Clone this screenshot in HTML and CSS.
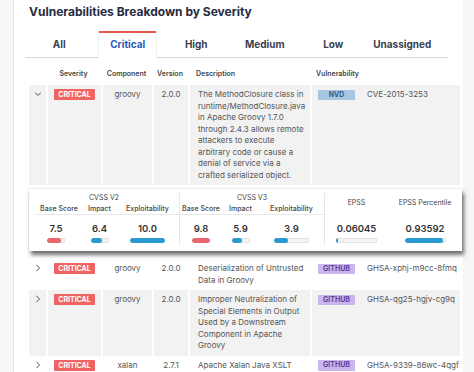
FILE: index.html
```html
<!DOCTYPE html>
<html>
<head>
<meta charset="utf-8">
<link rel="stylesheet" href="styles.css">
</head>
<body>
<div class="panel">
  <h1 class="title">Vulnerabilities Breakdown by Severity</h1>
  <div class="tabs">
    <div class="tab">All</div>
    <div class="tab active">Critical</div>
    <div class="tab">High</div>
    <div class="tab">Medium</div>
    <div class="tab">Low</div>
    <div class="tab">Unassigned</div>
  </div>
  <table class="vulns">
    <colgroup>
      <col class="c-chev"><col class="c-sev"><col class="c-comp"><col class="c-ver"><col class="c-desc"><col class="c-vuln">
    </colgroup>
    <thead>
      <tr>
        <th></th><th>Severity</th><th>Component</th><th>Version</th><th class="left desc-h">Description</th><th class="left vuln-h">Vulnerability</th>
      </tr>
    </thead>
    <tbody>
      <tr class="shaded">
        <td class="chev"><svg viewBox="0 0 8 8" width="8" height="8"><polyline points="1.2,2.8 4,5.4 6.8,2.8"/></svg></td>
        <td class="center"><span class="badge critical">CRITICAL</span></td>
        <td class="center">groovy</td>
        <td class="center">2.0.0</td>
        <td class="desc">The MethodClosure class in runtime/MethodClosure.java in Apache Groovy 1.7.0 through 2.4.3 allows remote attackers to execute arbitrary code or cause a denial of service via a crafted serialized object.</td>
        <td class="vuln"><span class="src nvd">NVD</span><span class="vid">CVE-2015-3253</span></td>
      </tr>
      <tr class="details">
        <td colspan="6">
          <div class="card">
            <div class="ghead">CVSS V2</div>
            <div class="ghead divider">CVSS V3</div>
            <div class="ehead divider">EPSS</div>
            <div class="ehead">EPSS Percentile</div>

            <div class="sub first">Base Score</div>
            <div class="sub">Impact</div>
            <div class="sub">Exploitability</div>
            <div class="sub divider">Base Score</div>
            <div class="sub">Impact</div>
            <div class="sub last">Exploitability</div>

            <div class="metric"><div class="num">7.5</div><div class="bar s"><div class="fill red" style="width:75%"></div></div></div>
            <div class="metric"><div class="num">6.4</div><div class="bar s"><div class="fill blue" style="width:64%"></div></div></div>
            <div class="metric"><div class="num">10.0</div><div class="bar m"><div class="fill blue" style="width:100%"></div></div></div>
            <div class="metric divider"><div class="num">9.8</div><div class="bar s"><div class="fill red" style="width:98%"></div></div></div>
            <div class="metric"><div class="num">5.9</div><div class="bar s"><div class="fill blue" style="width:59%"></div></div></div>
            <div class="metric"><div class="num">3.9</div><div class="bar m"><div class="fill blue" style="width:39%"></div></div></div>
            <div class="metric divider"><div class="num">0.06045</div><div class="bar l"><div class="fill blue" style="width:6%"></div></div></div>
            <div class="metric"><div class="num">0.93592</div><div class="bar l"><div class="fill blue" style="width:94%"></div></div></div>
          </div>
        </td>
      </tr>
      <tr>
        <td class="chev"><svg viewBox="0 0 8 8" width="8" height="8"><polyline points="2.5,0.8 5.5,4 2.5,7.2"/></svg></td>
        <td class="center"><span class="badge critical">CRITICAL</span></td>
        <td class="center">groovy</td>
        <td class="center">2.0.0</td>
        <td class="desc">Deserialization of Untrusted Data in Groovy</td>
        <td class="vuln"><span class="src github">GITHUB</span><span class="vid">GHSA-xphj-m9cc-8fmq</span></td>
      </tr>
      <tr class="shaded">
        <td class="chev"><svg viewBox="0 0 8 8" width="8" height="8"><polyline points="2.5,0.8 5.5,4 2.5,7.2"/></svg></td>
        <td class="center"><span class="badge critical">CRITICAL</span></td>
        <td class="center">groovy</td>
        <td class="center">2.0.0</td>
        <td class="desc">Improper Neutralization of Special Elements in Output Used by a Downstream Component in Apache Groovy</td>
        <td class="vuln"><span class="src github">GITHUB</span><span class="vid">GHSA-qg25-hgjv-cg9q</span></td>
      </tr>
      <tr>
        <td class="chev"><svg viewBox="0 0 8 8" width="8" height="8"><polyline points="2.5,0.8 5.5,4 2.5,7.2"/></svg></td>
        <td class="center"><span class="badge critical">CRITICAL</span></td>
        <td class="center">xalan</td>
        <td class="center">2.7.1</td>
        <td class="desc">Apache Xalan Java XSLT</td>
        <td class="vuln"><span class="src github">GITHUB</span><span class="vid">GHSA-9339-86wc-4qgf</span></td>
      </tr>
    </tbody>
  </table>
</div>
</body>
</html>
```

FILE: styles.css
```css
* { box-sizing: border-box; }
html, body { margin: 0; padding: 0; }
body {
  background: #f5f6f8;
  font-family: Inter, "Noto Sans", sans-serif;
  color: #555;
  width: 474px;
  height: 372px;
  overflow: hidden;
}
.panel {
  margin-left: 13px;
  width: 450px;
  min-height: 372px;
  background: #fff;
  border-left: 1px solid #e4e6ea;
  padding: 4px 3px 0 15px;
}
.title {
  margin: 0;
  font-size: 12px;
  line-height: 16px;
  font-weight: 700;
  color: #262b3f;
}
.tabs {
  display: grid;
  grid-template-columns: repeat(6, 68.5px);
  margin: 11px 12px 0 -4px;
  border-bottom: 1px solid #d5d8dd;
}
.tab {
  margin: 0 5.75px -1px;
  padding: 4px 0 6px;
  text-align: center;
  white-space: nowrap;
  line-height: 14px;
  font-size: 10px;
  font-weight: 700;
  color: #3a3f50;
  border-top: 2px solid transparent;
  border-bottom: 1px solid transparent;
}
.tab.active {
  border-top-color: #e4574f;
  border-bottom-color: #fff;
  color: #2a5bbf;
  background: #fff;
  box-shadow: -1px 0 0 #eef0f2, 1px 0 0 #eef0f2;
}
.vulns {
  margin-top: 8px;
  width: 431px;
  table-layout: fixed;
  border-collapse: separate;
  border-spacing: 0;
}
.c-chev { width: 17px; }
.c-sev { width: 55px; }
.c-comp { width: 51px; }
.c-ver { width: 36px; }
.c-desc { width: 122px; }
.c-vuln { width: 150px; }
.vulns th {
  font-size: 7px;
  font-weight: 600;
  color: #444;
  line-height: 10px;
  padding: 3px 0 6px;
  text-align: center;
}
.vulns th.left { text-align: left; }
.vulns th.desc-h { padding-left: 8px; }
.vulns th.vuln-h { padding-left: 6px; }
.vulns td {
  font-size: 8px;
  line-height: 11.5px;
  padding: 4px 0;
  vertical-align: top;
  color: #555;
}
.vulns td + td { border-left: 2px solid #fff; }
.vulns tr.shaded td { background: #f2f2f2; }
.vulns td.center { text-align: center; }
.vulns td.desc { padding: 4px 4px 4px 8px; }
.vulns td.vuln { padding-left: 6px; white-space: nowrap; }
.chev svg {
  display: block;
  margin: 1px auto 0;
  fill: none;
  stroke: #555;
  stroke-width: 1;
}
.badge {
  display: inline-block;
  vertical-align: top;
  height: 11px;
  line-height: 11px;
  padding: 0 4.5px;
  font-size: 7px;
  font-weight: 700;
  color: #fff;
  border-radius: 1px;
}
.badge.critical { background: #ef6462; }
.src {
  display: inline-block;
  vertical-align: top;
  width: 37px;
  height: 10.5px;
  line-height: 10.5px;
  margin-top: 0.5px;
  margin-right: 12px;
  text-align: center;
  font-size: 7px;
  font-weight: 700;
  border-radius: 1px;
}
.src.nvd { background: #a7c6e2; color: #3a5d8b; }
.src.github { background: #cab5ef; color: #5e3f98; }
.vulns tr.details td {
  padding: 4px 0 8px;
  background: #fff;
}
.card {
  margin-right: -2px;
  background: #fff;
  box-shadow: 2px 4px 4px rgba(0, 0, 0, 0.55), 0 0 2px rgba(0, 0, 0, 0.2);
  display: grid;
  grid-template-columns: 54px 33px 63px 43px 37px 65px 64px 1fr;
  padding: 4px 0 7px;
  color: #444;
}
.ghead {
  grid-column: span 3;
  text-align: center;
  font-size: 7px;
  line-height: 10px;
}
.ehead {
  grid-row: span 2;
  display: flex;
  align-items: center;
  justify-content: center;
  font-size: 7px;
  line-height: 10px;
  padding-bottom: 2px;
}
.sub {
  text-align: center;
  font-size: 7px;
  font-weight: 500;
  line-height: 10px;
  padding-top: 1px;
  border-bottom: 1px solid #e8e8e8;
  white-space: nowrap;
}
.sub.first { margin-left: 6px; }
.divider { border-left: 1px solid #e6e6e6; }
.metric {
  text-align: center;
  padding: 7px 0 1.5px;
}
.num {
  font-size: 9.5px;
  line-height: 13px;
  font-weight: 600;
  color: #333;
}
.bar {
  margin: 3px auto 0;
  height: 4.5px;
  border-radius: 3px;
  background: #f3f3f3;
  box-shadow: inset 0 0 0 0.5px #d4d4d4;
  overflow: hidden;
}
.bar.s { width: 18px; }
.bar.m { width: 35px; }
.bar.l { width: 41px; }
.fill { height: 100%; border-radius: 3px; }
.fill.red { background: #e8676b; }
.fill.blue { background: #2a9ad0; }
```
